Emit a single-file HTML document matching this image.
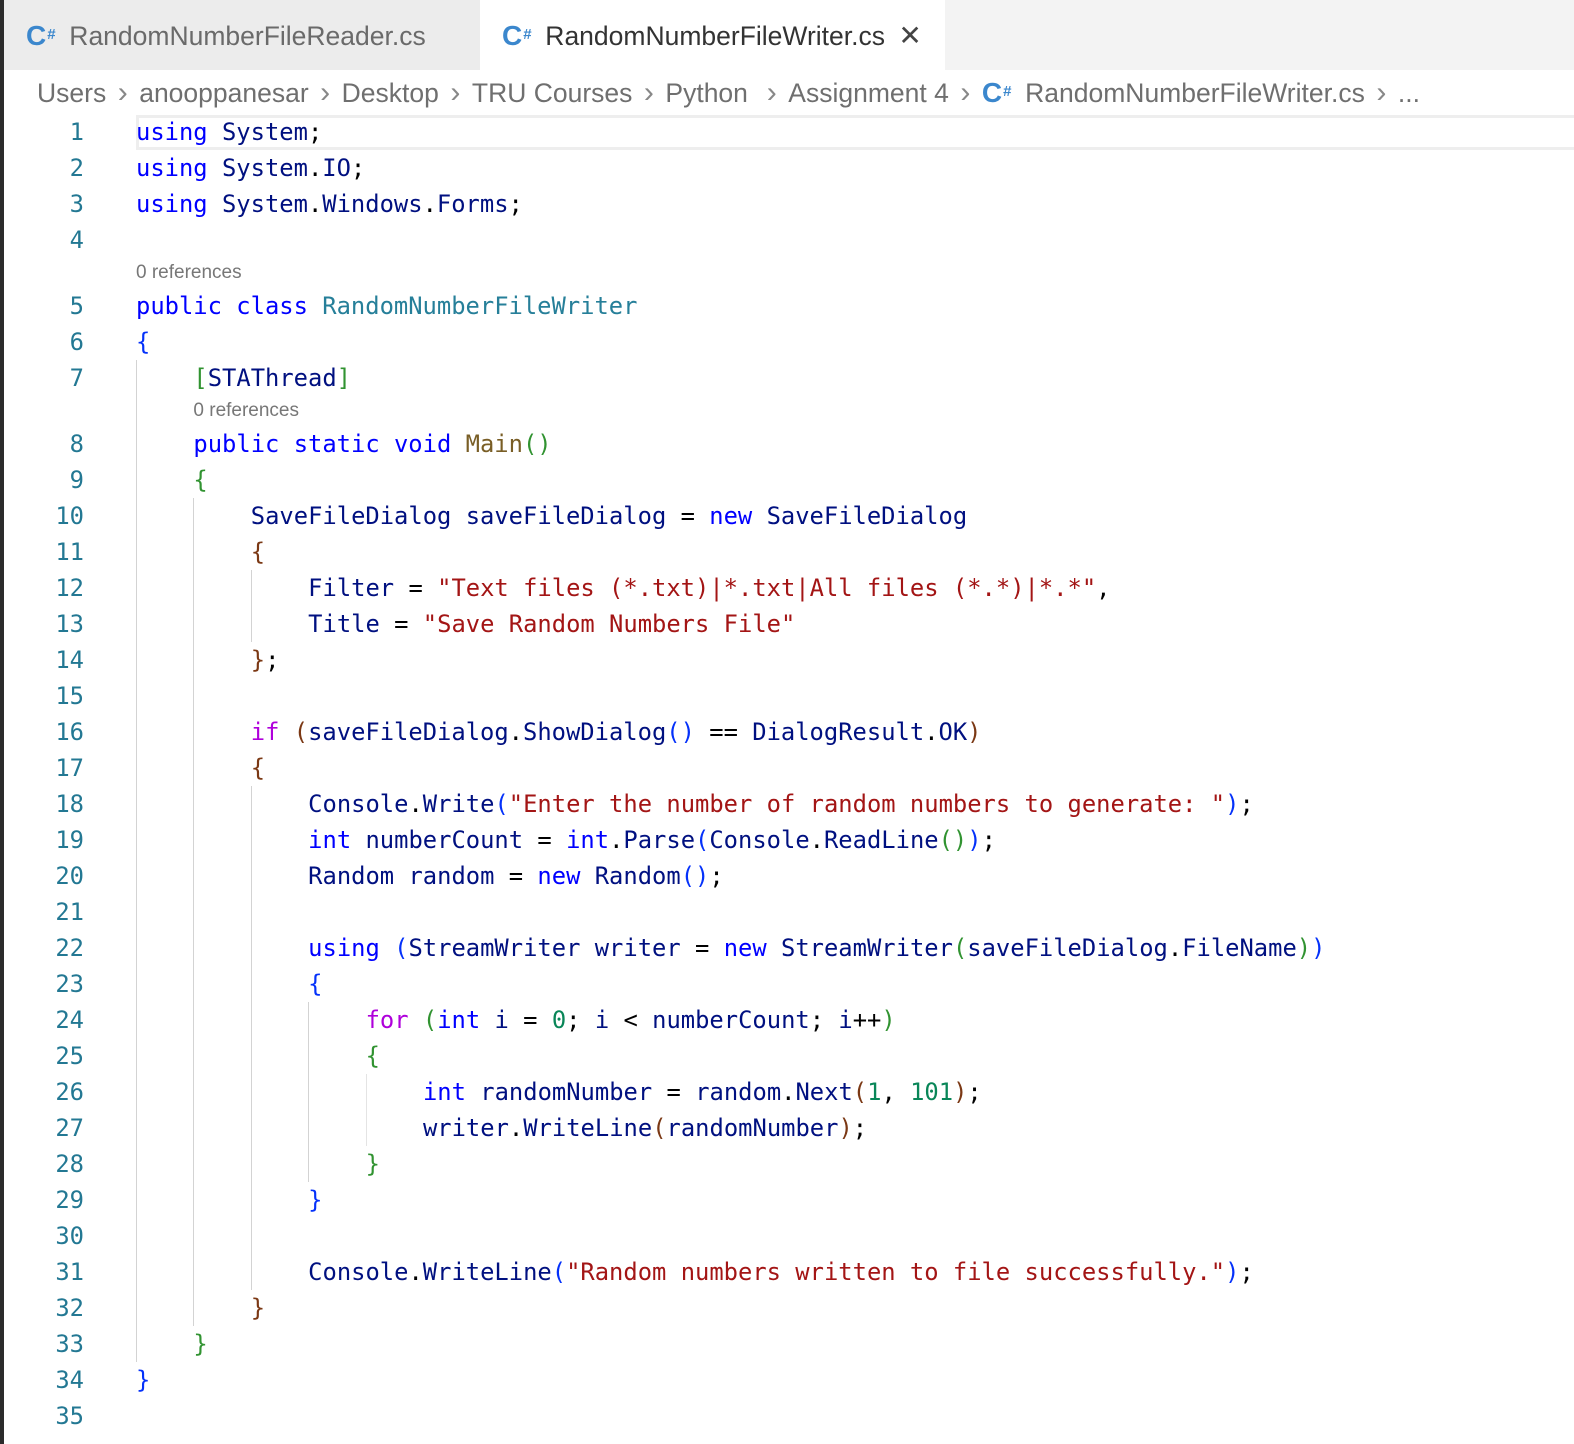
<!DOCTYPE html>
<html><head><meta charset="utf-8"><style>
*{margin:0;padding:0;box-sizing:border-box}
body{width:1574px;height:1444px;background:#fff;position:relative;overflow:hidden;font-family:"Liberation Sans",sans-serif}
.edge{position:absolute;left:0;top:0;width:4px;height:1444px;background:#2b2b2b}
.tabs{position:absolute;left:4px;top:0;width:1570px;height:70px;background:#f3f3f3}
.tab{position:absolute;top:0;height:70px;font-size:26.5px;line-height:70px;white-space:nowrap}
.cs{color:#3b87cd;font-weight:bold;font-size:28px;letter-spacing:-1px}
.cs sup{font-size:15px;vertical-align:6px;margin-left:2px}
.bc{position:absolute;left:37px;top:73px;height:38px;font-size:26.5px;line-height:38px;color:#6f6f6f;white-space:nowrap}
.bc .s{margin:0 11.5px;color:#888;font-size:30px}
.hl{position:absolute;left:136px;top:115px;width:1438px;height:35px;border:3px solid #eeeeee;border-right:none}
.code{position:absolute;left:0;top:114px;width:1574px;font-family:"DejaVu Sans Mono","Liberation Mono",monospace;font-size:23.8px}
.l{height:36px;line-height:36px;position:relative}
.n{position:absolute;left:0;width:84px;text-align:right;color:#237893}
.t{position:absolute;left:136px;color:#000;white-space:pre}
.cl{height:30px;line-height:30px;position:relative}
.cl .t{font-family:"Liberation Sans",sans-serif;font-size:19px;color:#777;line-height:30px}
i{display:inline-block;width:57.4px;height:36px;vertical-align:top;border-left:1.5px solid #d3d3d3}
.cl i{height:30px}
.k{color:#0000ff}.c{color:#af00db}.ty{color:#267f99}.v{color:#001080}.s1{color:#a31515}.m{color:#795e26}.num{color:#098658}
.b1{color:#0431fa}.b2{color:#319331}.b3{color:#7b3814}
</style></head><body>
<div class="edge"></div>
<div class="tabs">
 <div class="tab" style="left:0;width:476px;background:#ececec;padding-left:22px;color:#6a6a6a"><span class="cs">C<sup>#</sup></span>&nbsp; RandomNumberFileReader.cs</div>
 <div class="tab" style="left:476px;width:465px;background:#fff;padding-left:22px;color:#333"><span class="cs">C<sup>#</sup></span>&nbsp; RandomNumberFileWriter.cs <span style="margin-left:6px;font-size:28px;color:#444">✕</span></div>
</div>
<div class="bc">Users<span class="s">›</span>anooppanesar<span class="s">›</span>Desktop<span class="s">›</span>TRU Courses<span class="s">›</span>Python <span class="s">›</span>Assignment 4<span class="s">›</span><span class="cs">C<sup>#</sup></span>&nbsp; RandomNumberFileWriter.cs<span class="s">›</span>...</div>
<div class="hl"></div>
<div class="code">
<div class="l"><span class="n">1</span><span class="t"><span class="k">using</span> <span class="v">System</span>;</span></div>
<div class="l"><span class="n">2</span><span class="t"><span class="k">using</span> <span class="v">System</span>.<span class="v">IO</span>;</span></div>
<div class="l"><span class="n">3</span><span class="t"><span class="k">using</span> <span class="v">System</span>.<span class="v">Windows</span>.<span class="v">Forms</span>;</span></div>
<div class="l"><span class="n">4</span></div>
<div class="cl"><span class="t">0 references</span></div>
<div class="l"><span class="n">5</span><span class="t"><span class="k">public</span> <span class="k">class</span> <span class="ty">RandomNumberFileWriter</span></span></div>
<div class="l"><span class="n">6</span><span class="t"><span class="b1">{</span></span></div>
<div class="l"><span class="n">7</span><span class="t"><i></i><span class="b2">[</span><span class="v">STAThread</span><span class="b2">]</span></span></div>
<div class="cl"><span class="t"><i></i>0 references</span></div>
<div class="l"><span class="n">8</span><span class="t"><i></i><span class="k">public</span> <span class="k">static</span> <span class="k">void</span> <span class="m">Main</span><span class="b2">()</span></span></div>
<div class="l"><span class="n">9</span><span class="t"><i></i><span class="b2">{</span></span></div>
<div class="l"><span class="n">10</span><span class="t"><i></i><i></i><span class="v">SaveFileDialog</span> <span class="v">saveFileDialog</span> = <span class="k">new</span> <span class="v">SaveFileDialog</span></span></div>
<div class="l"><span class="n">11</span><span class="t"><i></i><i></i><span class="b3">{</span></span></div>
<div class="l"><span class="n">12</span><span class="t"><i></i><i></i><i></i><span class="v">Filter</span> = <span class="s1">"Text files (*.txt)|*.txt|All files (*.*)|*.*"</span>,</span></div>
<div class="l"><span class="n">13</span><span class="t"><i></i><i></i><i></i><span class="v">Title</span> = <span class="s1">"Save Random Numbers File"</span></span></div>
<div class="l"><span class="n">14</span><span class="t"><i></i><i></i><span class="b3">}</span>;</span></div>
<div class="l"><span class="n">15</span><span class="t"><i></i><i></i></span></div>
<div class="l"><span class="n">16</span><span class="t"><i></i><i></i><span class="c">if</span> <span class="b3">(</span><span class="v">saveFileDialog</span>.<span class="v">ShowDialog</span><span class="b1">()</span> == <span class="v">DialogResult</span>.<span class="v">OK</span><span class="b3">)</span></span></div>
<div class="l"><span class="n">17</span><span class="t"><i></i><i></i><span class="b3">{</span></span></div>
<div class="l"><span class="n">18</span><span class="t"><i></i><i></i><i></i><span class="v">Console</span>.<span class="v">Write</span><span class="b1">(</span><span class="s1">"Enter the number of random numbers to generate: "</span><span class="b1">)</span>;</span></div>
<div class="l"><span class="n">19</span><span class="t"><i></i><i></i><i></i><span class="k">int</span> <span class="v">numberCount</span> = <span class="k">int</span>.<span class="v">Parse</span><span class="b1">(</span><span class="v">Console</span>.<span class="v">ReadLine</span><span class="b2">()</span><span class="b1">)</span>;</span></div>
<div class="l"><span class="n">20</span><span class="t"><i></i><i></i><i></i><span class="v">Random</span> <span class="v">random</span> = <span class="k">new</span> <span class="v">Random</span><span class="b1">()</span>;</span></div>
<div class="l"><span class="n">21</span><span class="t"><i></i><i></i><i></i></span></div>
<div class="l"><span class="n">22</span><span class="t"><i></i><i></i><i></i><span class="k">using</span> <span class="b1">(</span><span class="v">StreamWriter</span> <span class="v">writer</span> = <span class="k">new</span> <span class="v">StreamWriter</span><span class="b2">(</span><span class="v">saveFileDialog</span>.<span class="v">FileName</span><span class="b2">)</span><span class="b1">)</span></span></div>
<div class="l"><span class="n">23</span><span class="t"><i></i><i></i><i></i><span class="b1">{</span></span></div>
<div class="l"><span class="n">24</span><span class="t"><i></i><i></i><i></i><i></i><span class="c">for</span> <span class="b2">(</span><span class="k">int</span> <span class="v">i</span> = <span class="num">0</span>; <span class="v">i</span> &lt; <span class="v">numberCount</span>; <span class="v">i</span>++<span class="b2">)</span></span></div>
<div class="l"><span class="n">25</span><span class="t"><i></i><i></i><i></i><i></i><span class="b2">{</span></span></div>
<div class="l"><span class="n">26</span><span class="t"><i></i><i></i><i></i><i></i><i style="border-color:#e4e4e4"></i><span class="k">int</span> <span class="v">randomNumber</span> = <span class="v">random</span>.<span class="v">Next</span><span class="b3">(</span><span class="num">1</span>, <span class="num">101</span><span class="b3">)</span>;</span></div>
<div class="l"><span class="n">27</span><span class="t"><i></i><i></i><i></i><i></i><i style="border-color:#e4e4e4"></i><span class="v">writer</span>.<span class="v">WriteLine</span><span class="b3">(</span><span class="v">randomNumber</span><span class="b3">)</span>;</span></div>
<div class="l"><span class="n">28</span><span class="t"><i></i><i></i><i></i><i></i><span class="b2">}</span></span></div>
<div class="l"><span class="n">29</span><span class="t"><i></i><i></i><i></i><span class="b1">}</span></span></div>
<div class="l"><span class="n">30</span><span class="t"><i></i><i></i><i></i></span></div>
<div class="l"><span class="n">31</span><span class="t"><i></i><i></i><i></i><span class="v">Console</span>.<span class="v">WriteLine</span><span class="b1">(</span><span class="s1">"Random numbers written to file successfully."</span><span class="b1">)</span>;</span></div>
<div class="l"><span class="n">32</span><span class="t"><i></i><i></i><span class="b3">}</span></span></div>
<div class="l"><span class="n">33</span><span class="t"><i></i><span class="b2">}</span></span></div>
<div class="l"><span class="n">34</span><span class="t"><span class="b1">}</span></span></div>
<div class="l"><span class="n">35</span></div>
</div>
</body></html>
